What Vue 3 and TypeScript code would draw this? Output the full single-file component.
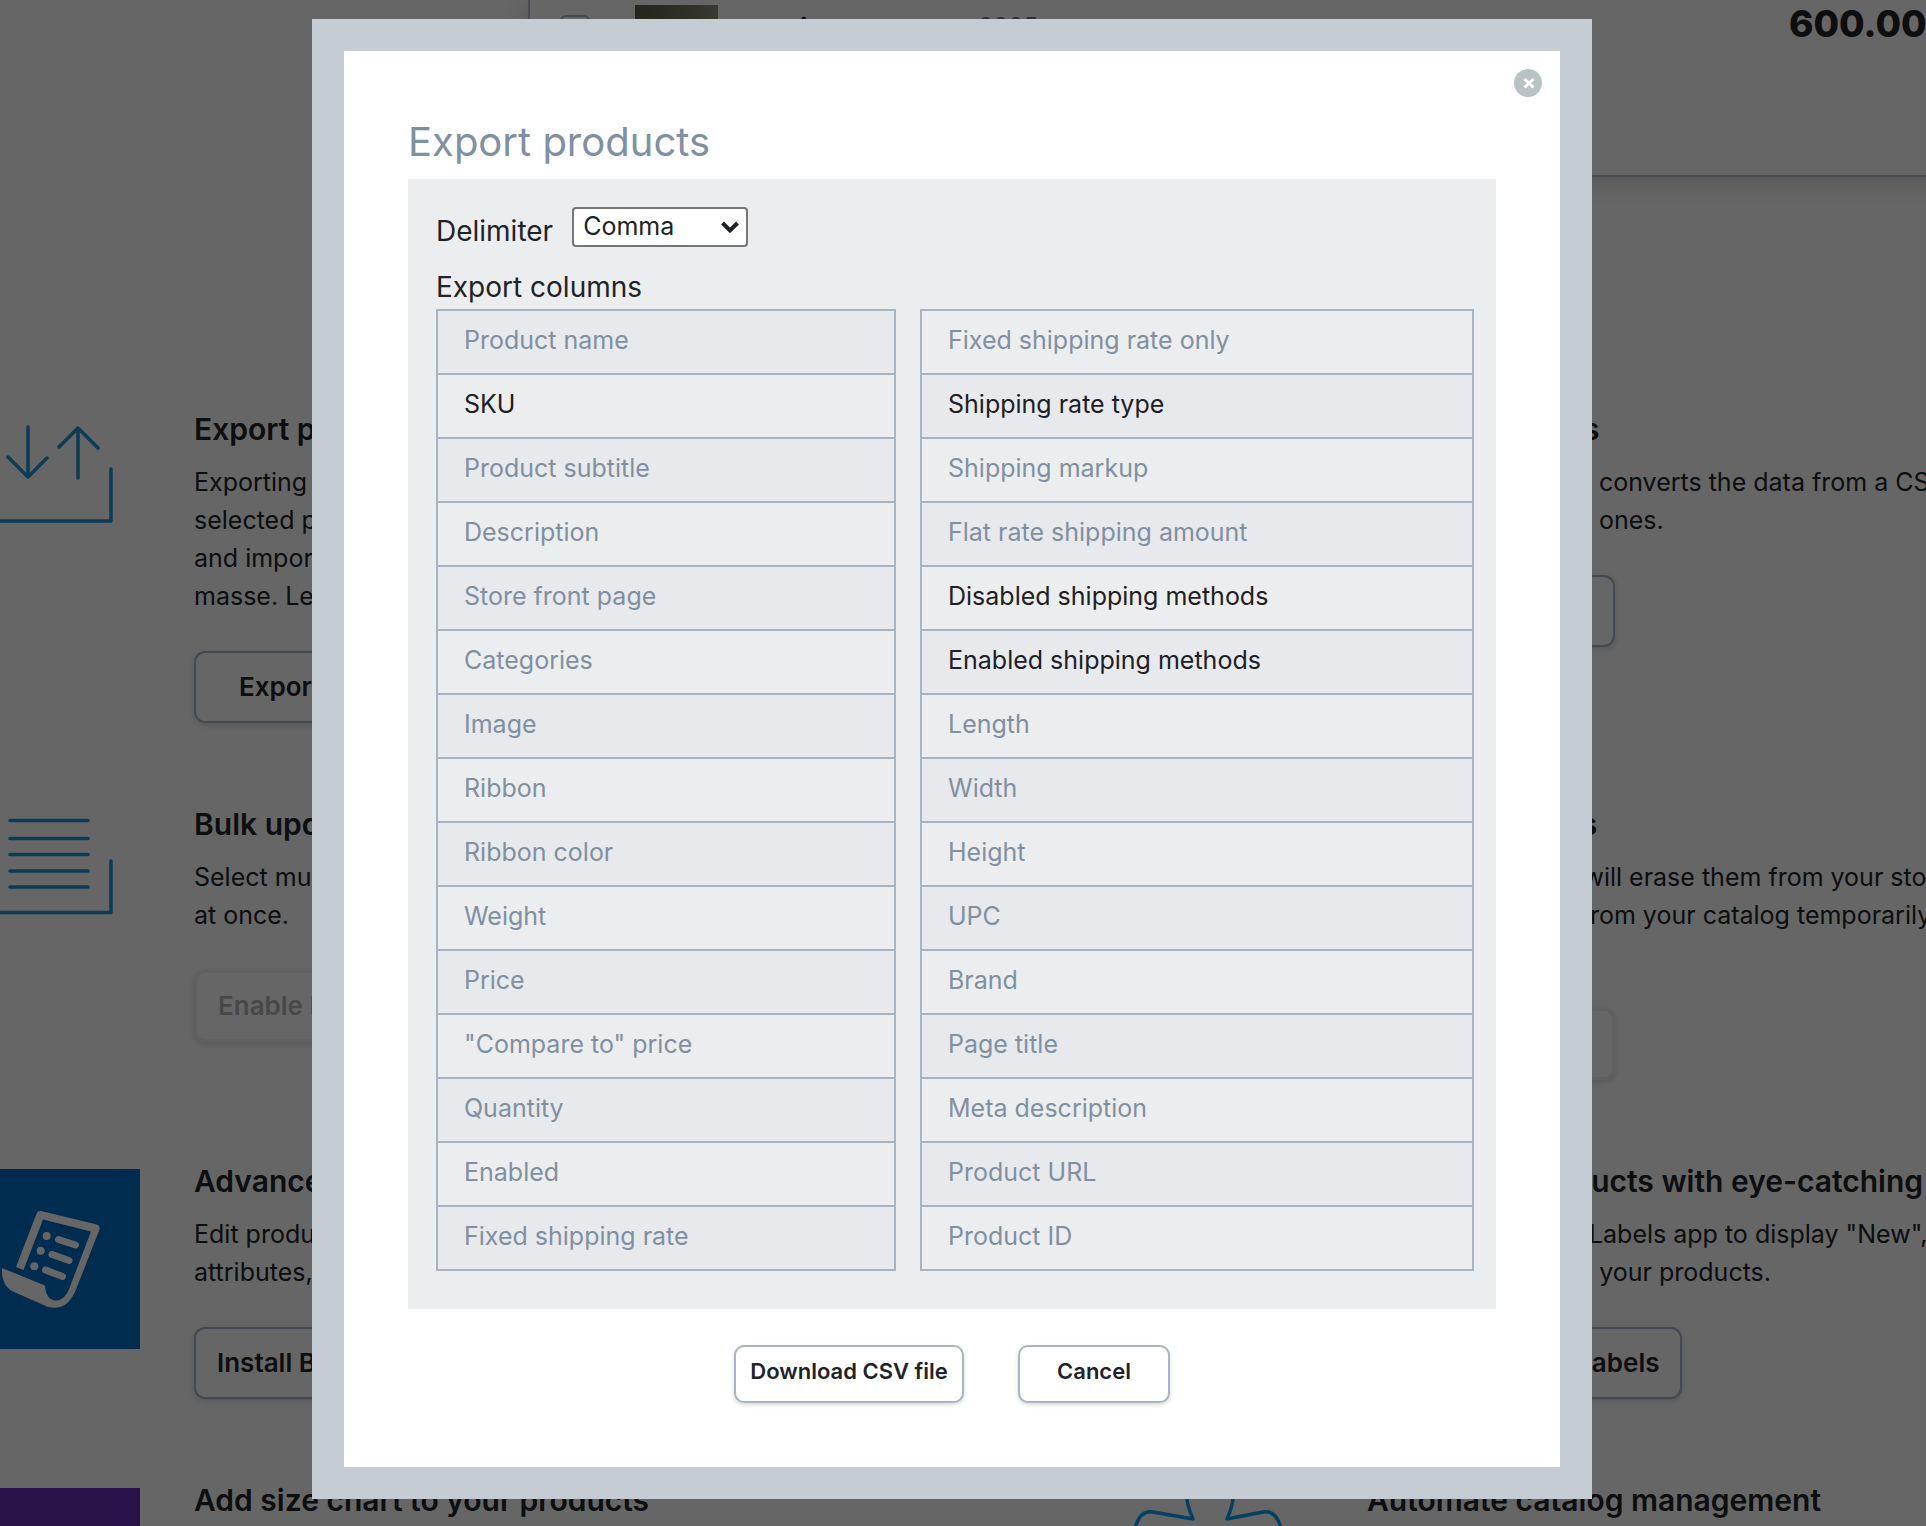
<script setup lang="ts">
import { computed, ref } from 'vue'

interface Column {
  name: string
  selected: boolean
}

interface Tool {
  title: string
  lines: string[]
  action: string
  icon: 'arrows' | 'lines' | 'editor' | 'chart' | 'gear' | 'none'
  disabled?: boolean
  wide?: boolean
}

const off = (name: string): Column => ({ name, selected: false })
const on = (name: string): Column => ({ name, selected: true })

const leftColumns = ref<Column[]>([
  off('Product name'),
  on('SKU'),
  off('Product subtitle'),
  off('Description'),
  off('Store front page'),
  off('Categories'),
  off('Image'),
  off('Ribbon'),
  off('Ribbon color'),
  off('Weight'),
  off('Price'),
  off('"Compare to" price'),
  off('Quantity'),
  off('Enabled'),
  off('Fixed shipping rate'),
])

const rightColumns = ref<Column[]>([
  off('Fixed shipping rate only'),
  on('Shipping rate type'),
  off('Shipping markup'),
  off('Flat rate shipping amount'),
  on('Disabled shipping methods'),
  on('Enabled shipping methods'),
  off('Length'),
  off('Width'),
  off('Height'),
  off('UPC'),
  off('Brand'),
  off('Page title'),
  off('Meta description'),
  off('Product URL'),
  off('Product ID'),
])

const lists = computed(() => [leftColumns.value, rightColumns.value])

const delimiter = ref('Comma')
const delimiters = ['Comma', 'Semicolon', 'Tab']

const tools: Tool[] = [
  {
    title: 'Export products',
    lines: ['Exporting a CSV', 'selected products', 'and import it en', 'masse. Learn more'],
    action: 'Export All',
    icon: 'arrows',
    wide: true,
  },
  {
    title: 'Import products',
    lines: ['Importing products converts the data from a CSV file', 'or updates existing ones.'],
    action: 'Import Products',
    icon: 'none',
  },
  {
    title: 'Bulk update products',
    lines: ['Select multiple products', 'at once.'],
    action: 'Enable bulk editing',
    icon: 'lines',
    disabled: true,
  },
  {
    title: 'Delete products',
    lines: ['Deleting products will erase them from your store.', 'Remove products from your catalog temporarily', 'by disabling them.'],
    action: 'Delete Products',
    icon: 'none',
    disabled: true,
  },
  {
    title: 'Advanced bulk editing',
    lines: ['Edit products, stock', 'attributes, prices'],
    action: 'Install Bulk Editor',
    icon: 'editor',
  },
  {
    title: 'Showcase products with eye-catching',
    lines: ['Install our Product Labels app to display "New",', 'or other badges on your products.'],
    action: 'Install Product Labels',
    icon: 'none',
  },
  {
    title: 'Add size chart to your products',
    lines: ['Help shoppers choose the right size.'],
    action: 'Install Size Chart',
    icon: 'chart',
  },
  {
    title: 'Automate catalog management',
    lines: ['Connect apps that keep your catalog fresh.'],
    action: 'See Apps',
    icon: 'gear',
  },
]
</script>

<template>
  <div class="app">
    <main class="page">
      <section class="card">
        <input class="card-check" type="checkbox" aria-label="Select product" />
        <div class="thumb"></div>
        <span class="card-name">maxi</span>
        <span class="card-sku">0005</span>
        <span class="card-price">600.00</span>
      </section>

      <div class="tools">
        <section v-for="tool in tools" :key="tool.title" class="tool">
          <div class="tool-icon" :class="tool.icon">
            <svg v-if="tool.icon === 'arrows'" viewBox="0 0 180 180">
              <path d="M68 10V60M48 40L68 60L87 41M118 61V11M99 30L118 11L138 31M151 52V104H28V52" />
            </svg>
            <svg v-else-if="tool.icon === 'lines'" viewBox="0 0 180 180">
              <path d="M50 8.500H128M50 26.500H128M50 42.500H128M50 59H128M50 75H128M151 49V100.500H28V49" />
            </svg>
            <svg v-else-if="tool.icon === 'editor'" class="filled" viewBox="0 0 180 180">
              <path d="M77 43.500Q78.500 41.500 81 42L137 55.500Q140.500 57 139.500 60.500L117 118Q108 143 88 138L54 123Q41 117 42 99L85 116.500Q86 131 96 131.500Q105 131.500 109.500 119L131 62.500L83 50.500L63.500 101L56 98Z" />
              <circle cx="86.700" cy="67" r="4" />
              <circle cx="80.700" cy="81.700" r="4" />
              <circle cx="74.300" cy="97.300" r="4" />
              <path class="bar" d="M98.500 70.500L115.500 76M92 85.500L109 91.500M85.500 101L102.500 107.500" />
            </svg>
            <svg v-else-if="tool.icon === 'gear'" viewBox="0 0 180 180">
              <path d="M3 37Q8 22 20 24L60 31Q53 15 54 6Q60 -8 77 -8Q94 -8 100 6Q101 15 94 31L130 24Q142 22 147 37" />
            </svg>
          </div>
          <div class="tool-body">
            <h2>{{ tool.title }}</h2>
            <p>
              <span v-for="line in tool.lines" :key="line">{{ line }}</span>
            </p>
            <button type="button" class="tool-button" :class="{ wide: tool.wide }" :disabled="tool.disabled">
              {{ tool.action }}
            </button>
          </div>
        </section>
      </div>
    </main>

    <div class="overlay">
      <div class="dialog" role="dialog" aria-modal="true" aria-labelledby="dialog-title">
        <button type="button" class="close" aria-label="Close">
          <svg viewBox="0 0 28 28">
            <circle cx="14" cy="14" r="14" />
            <path d="M10.500 10L19.500 18.500M19.500 10L10.500 18.500" />
          </svg>
        </button>
        <h1 id="dialog-title">Export products</h1>
        <div class="panel">
          <div class="field">
            <label for="delimiter">Delimiter</label>
            <div class="select">
              <select id="delimiter" v-model="delimiter">
                <option v-for="item in delimiters" :key="item">{{ item }}</option>
              </select>
              <svg viewBox="0 0 20 14"><path d="M2.500 3L10 10.500L17.500 3" /></svg>
            </div>
          </div>
          <div class="caption">Export columns</div>
          <div class="lists">
            <ul v-for="(list, index) in lists" :key="index">
              <li v-for="column in list" :key="column.name">
                <button
                  type="button"
                  :aria-pressed="column.selected"
                  :class="{ selected: column.selected }"
                  @click="column.selected = !column.selected"
                >
                  {{ column.name }}
                </button>
              </li>
            </ul>
          </div>
        </div>
        <div class="actions">
          <button type="button" class="download">Download CSV file</button>
          <button type="button">Cancel</button>
        </div>
      </div>
    </div>
  </div>
</template>

<style>
body {
  margin: 0;
  background: #fff;
}
</style>

<style scoped>
* {
  box-sizing: border-box;
}

.app {
  position: relative;
  height: 100vh;
  overflow: hidden;
  font-family: Inter, "Liberation Sans", sans-serif;
  color: #1e2328;
}

button,
select {
  font-family: inherit;
  color: inherit;
}

.card {
  display: flex;
  align-items: flex-start;
  height: 177px;
  margin: 0 -200px 0 528px;
  padding-left: 30px;
  border: 2px solid #b4bec8;
  border-top: 0;
  box-shadow: 0 4px 28px rgba(0, 0, 0, 0.16);
  white-space: nowrap;
}

.card-check {
  appearance: none;
  width: 30px;
  height: 30px;
  margin: 15px 45px 0 0;
  border: 2px solid #a8b7c8;
  border-radius: 6px;
}

.thumb {
  width: 83px;
  height: 83px;
  margin-top: 5px;
  background: linear-gradient(90deg, #59604f, #77775f 60%, #8f9180);
}

.card-name {
  width: 236px;
  margin: 12px 0 0 24px;
  font-size: 28px;
  line-height: 34px;
  font-weight: 700;
}

.card-sku {
  margin-top: 12px;
  font-size: 24px;
  line-height: 30px;
  color: #5f7b93;
}

.card-price {
  width: 335px;
  margin-left: auto;
  font-size: 37px;
  line-height: 48px;
  font-weight: 800;
}

.tools {
  display: grid;
  grid-template-columns: 1fr 1fr;
  gap: 89px 20px;
  margin: 240px -360px 0 -40px;
}

.tool {
  display: flex;
  gap: 54px;
  min-width: 0;
  white-space: nowrap;
}

.tool-icon {
  flex: none;
  width: 180px;
  height: 180px;
}

.tool-icon.editor {
  background: #006ec8;
}

.tool-icon.chart {
  background: #692db9;
}

.tool-icon svg {
  display: block;
  overflow: visible;
  fill: none;
  stroke: #1e96d4;
  stroke-width: 3.5;
  stroke-linecap: round;
  stroke-linejoin: round;
}

.tool-icon.gear svg {
  stroke: #0aa0f0;
}

.tool-icon svg.filled {
  fill: #fff;
  stroke: none;
}

.filled .bar {
  stroke: #fff;
  stroke-width: 7;
}

.tool h2 {
  margin: 0 0 22px;
  font-size: 30px;
  line-height: 24px;
  font-weight: 600;
}

.tool p {
  margin: 0 0 36px;
  font-size: 25px;
  line-height: 38px;
}

.tool p span {
  display: block;
}

.tool-button {
  height: 72px;
  padding: 0 21px 2px;
  border: 2px solid #a8b7c8;
  border-radius: 11px;
  background: #fff;
  box-shadow: 0 2px 6px rgba(0, 0, 0, 0.15);
  font-size: 26px;
  font-weight: 600;
}

.tool-button.wide {
  padding: 0 43px 2px;
}

.tool-button:disabled {
  border: 3px solid #f0f0f0;
  color: #b4b4b4;
}

.overlay {
  position: absolute;
  inset: 0;
  display: flex;
  align-items: flex-start;
  justify-content: center;
  padding: 19px 22px 0 0;
  background: rgba(0, 0, 0, 0.6);
}

.dialog {
  position: relative;
  width: 100%;
  max-width: 1280px;
  padding: 64px;
  border: 32px solid #c5ccd4;
  background: #fff;
}

.close {
  position: absolute;
  top: 18px;
  right: 18px;
  width: 28px;
  height: 28px;
  padding: 0;
  border: 0;
  background: none;
}

.close svg {
  display: block;
  fill: #b9c3c6;
}

.close path {
  stroke: #fff;
  stroke-width: 3;
}

h1 {
  margin: 0 0 10px;
  font-size: 40px;
  line-height: 54px;
  font-weight: 400;
  color: #7f90a2;
}

.panel {
  padding: 28px 22px 38px 28px;
  background: #ecedef;
}

.field {
  display: flex;
  gap: 19px;
  font-size: 28px;
  line-height: 48px;
}

.select {
  position: relative;
  height: 40px;
}

.select select {
  appearance: none;
  display: block;
  width: 176px;
  height: 40px;
  padding: 0 8px 2px 9px;
  border: 2px solid #767676;
  border-radius: 4px;
  background: #fff;
  font-size: 25px;
}

.select svg {
  position: absolute;
  top: 13px;
  right: 8px;
  width: 20px;
  height: 14px;
  fill: none;
  stroke: #1e2328;
  stroke-width: 4;
  pointer-events: none;
}

.caption {
  margin-top: 14px;
  font-size: 28px;
  line-height: 36px;
}

.lists {
  display: grid;
  grid-template-columns: 460fr 554fr;
  gap: 24px;
  margin-top: 4px;
}

.lists ul {
  margin: 0;
  padding: 0;
  border: 2px solid #a8b4bf;
  list-style: none;
}

.lists li + li {
  border-top: 2px solid #a8b4bf;
}

.lists ul:first-child li:nth-child(odd),
.lists ul:last-child li:nth-child(even) {
  background: #e8e9ed;
}

.lists button {
  display: block;
  width: 100%;
  height: 62px;
  padding: 0 26px 4px;
  border: 0;
  background: none;
  font-size: 25px;
  text-align: left;
  color: #8090a1;
}

.lists button.selected {
  color: #1e2023;
}

.actions {
  display: flex;
  justify-content: center;
  gap: 54px;
  margin-top: 36px;
}

.actions button {
  width: 152px;
  height: 58px;
  padding: 0 0 6px;
  border: 2px solid #a8b4c1;
  border-radius: 10px;
  background: #fff;
  box-shadow: 0 2px 4px rgba(0, 0, 0, 0.15);
  font-size: 22px;
  font-weight: 600;
}

.actions .download {
  width: 230px;
}
</style>
